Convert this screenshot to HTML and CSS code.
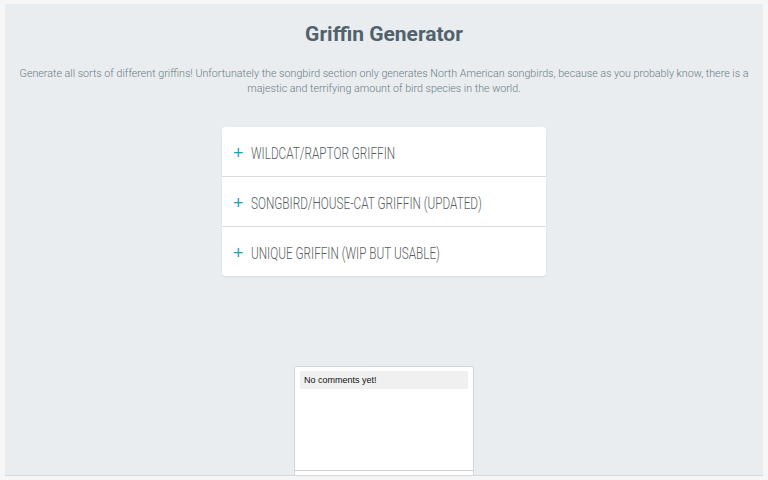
FILE: index.html
```
<!doctype html>
<html lang="en">
<head>
	<meta charset="UTF-8">
	<title>Griffin Generator</title>
	<link rel="stylesheet" href="styles.css">
</head>
<body>
	<div class="page">
		<h1 class="title">Griffin Generator</h1>
		<p class="intro">Generate all sorts of different griffins! Unfortunately the songbird section only generates North American songbirds, because as you probably know, there is a majestic and terrifying amount of bird species in the world.</p>
		<ul class="accordion">
			<li><span class="plus">+</span><span class="label">WILDCAT/RAPTOR GRIFFIN</span></li>
			<li><span class="plus">+</span><span class="label">SONGBIRD/HOUSE-CAT GRIFFIN (UPDATED)</span></li>
			<li><span class="plus">+</span><span class="label">UNIQUE GRIFFIN (WIP BUT USABLE)</span></li>
		</ul>
		<div class="comments">
			<p class="empty">No comments yet!</p>
			<div class="comments-foot"></div>
		</div>
	</div>
</body>
</html>
```
FILE: styles.css
```
html,body{
	margin: 0;
	padding: 0;
}
body{
	background-color: #f6f6f6;
	height: 480px;
	overflow: hidden;
}
p,ul,h1{
	margin: 0;
	padding: 0;
}
li{
	list-style: none;
}
.page{
	margin: 4px 5px 0 5px;
	height: 472px;
	background-color: #e9edf0;
	border-bottom: 1px solid #d6d9db;
	box-sizing: border-box;
	display: flex;
	flex-direction: column;
	align-items: center;
	overflow: hidden;
}
.title{
	font-family: Roboto, "Liberation Sans", sans-serif;
	font-weight: 700;
	font-size: 21px;
	color: #52626c;
	margin-top: 17px;
	line-height: 26px;
}
.intro{
	font-family: Roboto, "Liberation Sans", sans-serif;
	font-weight: 300;
	font-size: 10.7px;
	line-height: 15px;
	color: #6c7b84;
	text-align: center;
	margin-top: 19px;
	padding: 0 10px;
}
.accordion{
	width: 324px;
	margin-top: 31px;
	background-color: #fff;
	border-radius: 3px;
	box-shadow: 0 1px 2px rgba(0,0,0,0.08);
}
.accordion li{
	height: 46px;
	display: flex;
	align-items: center;
	padding: 3px 0 0 11px;
	border-top: 1px solid #dadddf;
	font-family: Roboto, "Liberation Sans", sans-serif;
	font-weight: 300;
	font-size: 16px;
	color: #575e63;
	white-space: nowrap;
	overflow: hidden;
}
.accordion li:first-child{
	border-top: none;
}
/* condensed caps, squeezed from the left edge */
.label{
	display: inline-block;
	transform: scaleX(0.735);
	transform-origin: left center;
}
.plus{
	flex-shrink: 0;
	color: #1aa3b6;
	font-size: 18px;
	width: 18px;
	margin-top: 1px;
	font-family: "Liberation Sans", sans-serif;
	font-weight: 300;
}
.comments{
	width: 180px;
	margin-top: 90px;
	flex: 1;
	background-color: #fff;
	border: 1px solid #d4d7d9;
	border-bottom: none;
	border-radius: 2px 2px 0 0;
	padding: 4px 5px 0 5px;
	box-sizing: border-box;
	display: flex;
	flex-direction: column;
}
.empty{
	background-color: #f0f0f0;
	font-family: "Liberation Sans", Arial, sans-serif;
	font-size: 9px;
	line-height: 18px;
	padding-left: 4px;
	color: #111;
}
.comments-foot{
	margin-top: auto;
	height: 4px;
	border-top: 1px solid #cfd2d4;
	margin-left: -5px;
	margin-right: -5px;
}
```
